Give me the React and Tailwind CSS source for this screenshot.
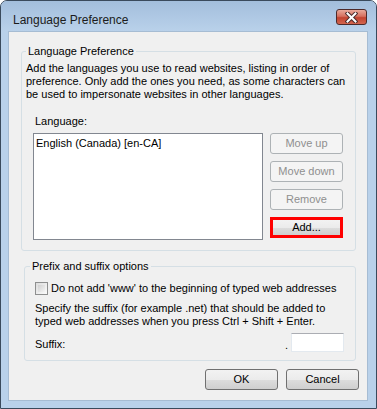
import React from 'react';

const Button = ({ label, disabled, className = '' }) => (
  <div
    className={`h-[21px] w-[73px] flex items-center justify-center rounded-[3px] border ${
      disabled
        ? 'border-[#adb2b5] bg-[#f4f4f4] text-[#8f8f8f]'
        : 'border-[#707070] bg-[linear-gradient(to_bottom,#f2f2f2_0%,#ebebeb_50%,#dddddd_51%,#cfcfcf_100%)] text-black'
    } ${className}`}
  >
    {label}
  </div>
);

const CloseButton = () => (
  <div className="mt-[2px] h-[16px] w-[31px] rounded-[3px] border border-[#4d2a2a] bg-[linear-gradient(to_bottom,#e9a99a_0%,#d6705f_45%,#c2432f_55%,#d3664f_100%)] flex items-center justify-center">
    <svg width="13" height="11" viewBox="0 0 13 11">
      <path d="M2.5 1.5 L10.5 9.5 M10.5 1.5 L2.5 9.5" stroke="#4a2b2b" strokeWidth="4" strokeLinecap="square" />
      <path d="M2.5 1.5 L10.5 9.5 M10.5 1.5 L2.5 9.5" stroke="#ffffff" strokeWidth="2" strokeLinecap="square" />
    </svg>
  </div>
);

const App = () => {
  return (
    <div className="w-[377px] h-[409px] bg-white font-['Liberation_Sans',sans-serif] text-[11px] text-black">
      <div className="w-full h-full flex flex-col rounded-t-[7px] border border-[#3a4a5c] bg-[#b9d1ea]">
        {/* title bar */}
        <div className="h-[30px] flex items-center justify-between pl-[12px] pr-[9px] rounded-t-[6px] bg-[linear-gradient(to_bottom,#a3bedc,#b9d1ea)]">
          <span className="text-[12px] text-[#1b1b1b] mt-[8px]">Language Preference</span>
          <CloseButton />
        </div>

        {/* client area */}
        <div className="ml-[7px] mr-[8px] mb-[7px] flex-1 flex flex-col bg-[#f0f0f0] border border-[#a6bcd3]">
          <fieldset className="min-w-0 mt-[12px] ml-[12px] mr-[11px] rounded-[3px] border border-[#d5dfe5] pb-[10px]">
            <legend className="ml-[4px] px-[2px] leading-[14px]">Language Preference</legend>
            <div className="px-[4px]">
              <p className="pt-[4px] leading-[13px] whitespace-nowrap">
                Add the languages you use to read websites, listing in order of
                <br />
                preference. Only add the ones you need, as some characters can
                <br />
                be used to impersonate websites in other languages.
              </p>
              <div className="mt-[14px] ml-[9px] leading-[13px]">Language:</div>
              <div className="mt-[5px] ml-[7px] flex gap-[7px]">
                <div className="w-[230px] h-[107px] bg-white border border-[#828790] px-[2px] pt-[2px] leading-[14px]">
                  English (Canada) [en-CA]
                </div>
                <div className="flex flex-col gap-[7px]">
                  <Button label="Move up" disabled />
                  <Button label="Move down" disabled />
                  <Button label="Remove" disabled />
                  <div className="h-[21px] w-[73px] border-[3px] border-[#ff0000] bg-[linear-gradient(to_bottom,#f2f2f2_0%,#ebebeb_50%,#dddddd_51%,#cfcfcf_100%)] flex items-center justify-center">
                    Add...
                  </div>
                </div>
              </div>
            </div>
          </fieldset>

          <fieldset className="min-w-0 mt-[8px] ml-[15px] mr-[11px] rounded-[3px] border border-[#d5dfe5] pb-[8px]">
            <legend className="ml-[5px] px-[2px] leading-[14px]">Prefix and suffix options</legend>
            <div className="pl-[10px] pr-[11px]">
              <label className="mt-[8px] flex items-center gap-[3px] leading-[15px]">
                <span className="w-[13px] h-[13px] border border-[#8e8f8f] bg-[linear-gradient(135deg,#dcdcdc,#fbfbfb)] p-[2px]">
                  <span className="block w-full h-full bg-[linear-gradient(135deg,#d0d0d0,#f4f4f4)]" />
                </span>
                <span className="whitespace-nowrap">Do not add 'www' to the beginning of typed web addresses</span>
              </label>
              <p className="mt-[6px] leading-[13px] whitespace-nowrap">
                Specify the suffix (for example .net) that should be added to
                <br />
                typed web addresses when you press Ctrl + Shift + Enter.
              </p>
              <div className="mt-[5px] flex items-start">
                <span className="flex-1 mt-[5px] leading-[13px]">Suffix:</span>
                <span className="mt-[6px] mr-[3px] leading-[13px]">.</span>
                <div className="w-[53px] h-[19px] bg-white border border-[#e3e9ef] border-t-[#abadb3]" />
              </div>
            </div>
          </fieldset>

          <div className="mt-[8px] pr-[8px] flex justify-end gap-[8px]">
            <Button label="OK" />
            <Button label="Cancel" />
          </div>
        </div>
      </div>
    </div>
  );
};

export default App;
